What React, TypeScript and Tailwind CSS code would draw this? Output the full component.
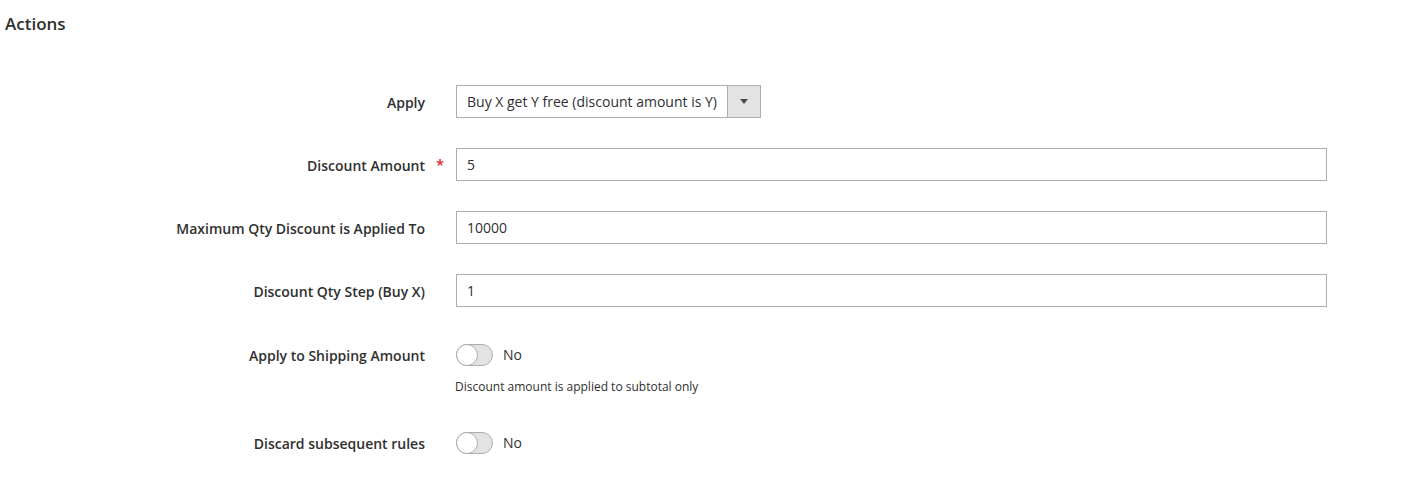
import React from 'react';

const font = { fontFamily: '"Open Sans", "Liberation Sans", sans-serif' };

const Label = ({ text, required }: { text: string; required?: boolean }) => (
  <div className="relative w-[456px] shrink-0 pr-[31px] pt-[2px] text-right text-[14px] font-semibold text-[#303030]">
    {text}
    {required && <span className="absolute right-[12px] top-[1px] text-[#e22626]">*</span>}
  </div>
);

const TextInput = ({ value }: { value: string }) => (
  <div className="flex h-[33px] w-[871px] items-center border border-[#adadad] bg-white px-[10px] text-[14px] text-[#303030]">
    {value}
  </div>
);

const Toggle = () => (
  <div className="flex items-center">
    <div className="relative h-[22px] w-[37px] rounded-full border border-[#adadad] bg-[#e3e3e3]">
      <div className="absolute left-[-1px] top-[-1px] h-[22px] w-[22px] rounded-full border border-[#adadad] bg-white" />
    </div>
    <span className="ml-[10px] text-[14px] text-[#303030]">No</span>
  </div>
);

export default function App() {
  return (
    <div className="h-[492px] w-[1408px] bg-white" style={font}>
      <h2 className="pl-[5px] pt-[13px] text-[17px] font-semibold leading-[22px] text-[#303030]">Actions</h2>

      <div className="mt-[50px] flex flex-col">
        <div className="flex h-[33px] items-center">
          <Label text="Apply" />
          <div className="flex h-[33px] w-[305px] items-stretch border border-[#adadad] bg-white text-[14px] text-[#303030]">
            <div className="flex flex-1 items-center px-[10px]">Buy X get Y free (discount amount is Y)</div>
            <div className="flex w-[33px] items-center justify-center border-l border-[#adadad] bg-[#e3e3e3]">
              <div className="h-0 w-0 border-x-[4px] border-t-[5px] border-x-transparent border-t-[#514943]" />
            </div>
          </div>
        </div>

        <div className="mt-[30px] flex h-[33px] items-center">
          <Label text="Discount Amount" required />
          <TextInput value="5" />
        </div>

        <div className="mt-[30px] flex h-[33px] items-center">
          <Label text="Maximum Qty Discount is Applied To" />
          <TextInput value="10000" />
        </div>

        <div className="mt-[30px] flex h-[33px] items-center">
          <Label text="Discount Qty Step (Buy X)" />
          <TextInput value="1" />
        </div>

        <div className="mt-[31px] flex h-[33px] items-center">
          <Label text="Apply to Shipping Amount" />
          <Toggle />
        </div>
        <div className="mt-[7px] pl-[455px] text-[12px] leading-[17px] text-[#303030]">
          Discount amount is applied to subtotal only
        </div>

        <div className="mt-[31px] flex h-[33px] items-center">
          <Label text="Discard subsequent rules" />
          <Toggle />
        </div>
      </div>
    </div>
  );
}
